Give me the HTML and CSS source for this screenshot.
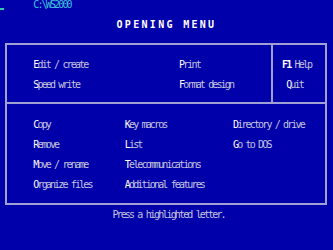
FILE: index.html
```html
<!DOCTYPE html>
<html lang="en">
<head>
  <meta charset="UTF-8">
  <title>WordStar 2000 - Opening Menu</title>
  <link rel="stylesheet" href="styles.css">
</head>
<body>

<div class="screen">
  <div class="row top-line">
    <span class="cursor"></span>
    <span class="path">C:\WS2000</span>
  </div>

  <div class="row title">O P E N I N G   M E N U</div>

  <div class="menu-box">
    <div class="upper">
      <div class="main-opts">
        <div class="opt"><span class="key">E</span>dit / create</div>
        <div class="opt"><span class="key">P</span>rint</div>
        <div class="opt"><span class="key">S</span>peed write</div>
        <div class="opt"><span class="key">F</span>ormat design</div>
      </div>
      <div class="side-opts">
        <div class="opt"><span class="key fkey">F1</span> Help</div>
        <div class="opt indent"><span class="key">Q</span>uit</div>
      </div>
    </div>

    <div class="lower">
      <div class="opt"><span class="key">C</span>opy</div>
      <div class="opt"><span class="key">K</span>ey macros</div>
      <div class="opt"><span class="key">D</span>irectory / drive</div>

      <div class="opt"><span class="key">R</span>emove</div>
      <div class="opt"><span class="key">L</span>ist</div>
      <div class="opt"><span class="key">G</span>o to DOS</div>

      <div class="opt"><span class="key">M</span>ove / rename</div>
      <div class="opt"><span class="key">T</span>elecommunications</div>
      <div class="opt"></div>

      <div class="opt"><span class="key">O</span>rganize files</div>
      <div class="opt"><span class="key">A</span>dditional features</div>
      <div class="opt"></div>
    </div>
  </div>

  <div class="row hint">Press a highlighted letter.</div>
</div>

</body>
</html>
```

FILE: styles.css
```css
:root {
  --c: 4.1625px;
}

body {
  margin: 0;
  padding: 0;
  background-color: #0000aa;
  font-family: 'DejaVu Sans Mono', 'Liberation Mono', monospace;
  font-size: 10px;
  letter-spacing: -1.858px;
  line-height: 10px;
  color: #c4c4dc;
}

.screen {
  width: 333px;
  height: 250px;
  overflow: hidden;
}

.row {
  height: 10px;
  white-space: pre;
}

.top-line {
  display: flex;
}

.cursor {
  width: 4px;
  height: 2px;
  margin-top: 8px;
  background-color: #30c8b0;
}

.path {
  margin-left: calc(8 * var(--c) - 4px);
  color: #40c4dc;
}

.title {
  margin-top: 10px;
  padding-left: calc(28 * var(--c));
  color: #ffffff;
  font-weight: bold;
}

.menu-box {
  margin: 13px 0 0 5px;
  width: 322px;
  height: 162px;
  box-sizing: border-box;
  border: 2px solid #a0a0d4;
}

.upper {
  display: flex;
  height: 57px;
}

.main-opts {
  flex: 1;
  display: grid;
  grid-template-columns: calc(35 * var(--c)) auto;
  grid-auto-rows: 10px;
  row-gap: 10px;
  padding: 15px 0 0 26.3px;
}

.side-opts {
  width: 43px;
  border-left: 2px solid #a0a0d4;
  display: grid;
  grid-auto-rows: 10px;
  row-gap: 10px;
  padding: 15px 0 0 9.4px;
}

.lower {
  border-top: 2px solid #a0a0d4;
  display: grid;
  grid-template-columns: calc(22 * var(--c)) calc(26 * var(--c)) auto;
  grid-auto-rows: 10px;
  row-gap: 10px;
  padding: 16px 0 0 26.3px;
}

.opt {
  white-space: pre;
}

.indent {
  padding-left: var(--c);
}

.key {
  color: #ffffff;
}

.fkey {
  font-weight: bold;
}

.hint {
  margin-top: 5px;
  padding-left: calc(27 * var(--c));
}
```
